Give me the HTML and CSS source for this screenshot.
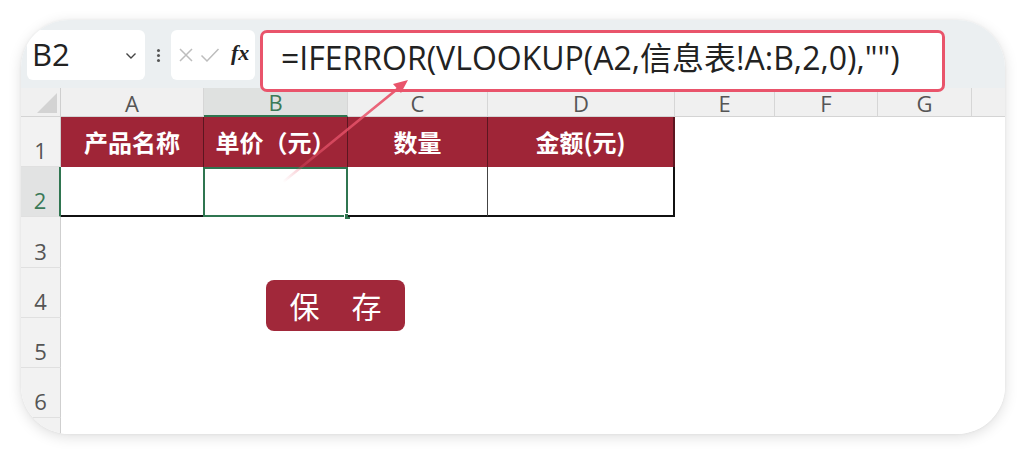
FILE: index.html
```html
<!DOCTYPE html>
<html lang="zh">
<head>
<meta charset="utf-8">
<title>Sheet</title>
<link rel="stylesheet" href="styles.css">
</head>
<body>
<div class="card">
  <div class="fbar">
    <div class="namebox">
      <span class="ref">B2</span>
      <svg class="chev" width="12" height="8" viewBox="0 0 12 8"><path d="M1.5 1.5 L6 6 L10.5 1.5" fill="none" stroke="#444" stroke-width="1.4"/></svg>
    </div>
    <div class="dots"><i></i><i></i><i></i></div>
    <div class="fxbox">
      <svg width="16" height="16" viewBox="0 0 16 16"><path d="M2 2 L14 14 M14 2 L2 14" stroke="#bdbdbd" stroke-width="1.5" fill="none"/></svg>
      <svg width="20" height="16" viewBox="0 0 20 16"><path d="M1.5 8.5 L7 14 L18.5 2" stroke="#bdbdbd" stroke-width="1.5" fill="none"/></svg>
      <span class="fx">fx</span>
    </div>
    <div class="formula">=IFERROR(VLOOKUP(A2,信息表!A:B,2,0),"")</div>
  </div>
  <div class="sheet">
    <div class="corner"><span class="tri"></span></div>
    <div class="ch">A</div>
    <div class="ch sel">B</div>
    <div class="ch">C</div>
    <div class="ch">D</div>
    <div class="ch">E</div>
    <div class="ch">F</div>
    <div class="ch">G</div>
    <div class="ch last"></div>

    <div class="rh">1</div>
    <div class="th">产品名称</div>
    <div class="th">单价（元）</div>
    <div class="th">数量</div>
    <div class="th end">金额(元)</div>
    <div class="blank"></div><div class="blank"></div><div class="blank"></div><div class="blank"></div>

    <div class="rh sel">2</div>
    <div class="td"></div>
    <div class="td sel"><span class="handle"></span></div>
    <div class="td"></div>
    <div class="td end"></div>
    <div class="blank"></div><div class="blank"></div><div class="blank"></div><div class="blank"></div>

    <div class="rh">3</div>
    <div class="blank"></div><div class="blank"></div><div class="blank"></div><div class="blank"></div><div class="blank"></div><div class="blank"></div><div class="blank"></div><div class="blank"></div>
    <div class="rh">4</div>
    <div class="blank"></div><div class="blank"></div><div class="blank"></div><div class="blank"></div><div class="blank"></div><div class="blank"></div><div class="blank"></div><div class="blank"></div>
    <div class="rh">5</div>
    <div class="blank"></div><div class="blank"></div><div class="blank"></div><div class="blank"></div><div class="blank"></div><div class="blank"></div><div class="blank"></div><div class="blank"></div>
    <div class="rh">6</div>
    <div class="blank"></div><div class="blank"></div><div class="blank"></div><div class="blank"></div><div class="blank"></div><div class="blank"></div><div class="blank"></div><div class="blank"></div>
    <div class="rh last"></div>
    <div class="blank"></div><div class="blank"></div><div class="blank"></div><div class="blank"></div><div class="blank"></div><div class="blank"></div><div class="blank"></div><div class="blank"></div>
  </div>
  <div class="save"><span>保</span><span>存</span></div>
  <svg class="arrow" width="984" height="414" viewBox="0 0 984 414">
    <defs>
      <linearGradient id="fade" x1="262" y1="162" x2="384" y2="63" gradientUnits="userSpaceOnUse">
        <stop offset="0" stop-color="#e9546b" stop-opacity="0"/>
        <stop offset="0.35" stop-color="#e9546b" stop-opacity="0.7"/>
        <stop offset="1" stop-color="#e9546b" stop-opacity="1"/>
      </linearGradient>
    </defs>
    <path d="M262 162 L380 66" stroke="url(#fade)" stroke-width="2.6" fill="none" stroke-linecap="round"/>
    <path d="M387 60 L372 64 L380 73 Z" fill="#e9546b"/>
  </svg>
</div>
</body>
</html>
```
FILE: styles.css
```css
* { box-sizing: border-box; }
html, body { margin: 0; padding: 0; background: #ffffff; }
body { width: 1024px; height: 454px; overflow: hidden; font-family: "Open Sans", "Noto Sans", "Noto Sans CJK SC", sans-serif; }

.card {
  position: relative;
  margin: 20px 0 0 21px;
  width: 984px;
  height: 414px;
  border-radius: 48px;
  overflow: hidden;
  background: #ffffff;
  box-shadow: 0 3px 14px rgba(0, 0, 0, 0.13), 0 0 3px rgba(0, 0, 0, 0.06);
}

.fbar {
  height: 68px;
  background: #ebeff1;
  display: flex;
  align-items: flex-start;
  padding: 10px 0 0 6px;
  position: relative;
  z-index: 2;
}
.namebox {
  width: 118px;
  height: 50px;
  background: #fff;
  border-radius: 6px;
  display: flex;
  align-items: center;
  justify-content: space-between;
  padding: 0 8px 0 5px;
}
.ref { font-size: 31px; color: #222; line-height: 1; margin-top: -2px; }
.chev { margin-top: 2px; }
.dots {
  width: 26px;
  height: 50px;
  display: flex;
  flex-direction: column;
  align-items: center;
  justify-content: center;
  gap: 2px;
}
.dots i { display: block; width: 3px; height: 3px; border-radius: 50%; background: #555; }
.fxbox {
  width: 84px;
  height: 50px;
  background: #fff;
  border-radius: 6px;
  display: flex;
  align-items: center;
  padding-left: 7px;
  gap: 6px;
}
.fx {
  font-family: "Liberation Serif", "DejaVu Serif", serif;
  font-style: italic;
  font-weight: 700;
  font-size: 22px;
  color: #222;
  margin-left: 5px;
  margin-top: -4px;
}
.formula {
  margin-left: 5px;
  width: 685px;
  height: 62px;
  background: #fff;
  border: 3px solid #e9546b;
  border-radius: 7px;
  padding: 0 0 6px 18px;
  display: flex;
  align-items: center;
  font-size: 32px;
  color: #222;
  white-space: nowrap;
  line-height: 1;
}

.sheet {
  display: grid;
  grid-template-columns: 40px 143px 144px 140px 187px 100px 103px 94px 1fr;
  grid-template-rows: 29px 50px 50px 51px 50px 50px 50px 1fr;
  height: 346px;
  font-family: "Open Sans", "Noto Sans", sans-serif;
}
.corner {
  background: #f0f0f0;
  border-bottom: 1px solid #d4d4d4;
  border-right: 1px solid #cfcfcf;
  position: relative;
}
.tri {
  position: absolute;
  right: 3px;
  bottom: 3px;
  width: 0;
  height: 0;
  border-left: 20px solid transparent;
  border-bottom: 20px solid #d3d3d3;
}
.ch {
  background: #f0f0f0;
  border-right: 1px solid #d6d6d6;
  border-bottom: 1px solid #d4d4d4;
  display: flex;
  align-items: center;
  justify-content: center;
  font-size: 22px;
  color: #555;
  padding-top: 1px;
}
.ch.sel {
  background: #dfe1e0;
  color: #3b7a58;
  border-bottom: 2px solid #2f7550;
}
.ch.last { border-right: none; }
.rh {
  background: #f2f2f2;
  border-right: 1px solid #cfcfcf;
  border-bottom: 1px solid #e0e0e0;
  display: flex;
  align-items: flex-end;
  justify-content: center;
  font-size: 22px;
  color: #555;
  padding-bottom: 1px;
}
.rh.sel {
  background: #e2e3e3;
  color: #3b7a58;
  border-right: 2px solid #2f7550;
}
.rh.last { border-bottom: none; }
.th {
  background: #9f2537;
  color: #fff;
  font-family: "Noto Sans CJK SC", "Noto Sans", sans-serif;
  font-weight: 700;
  font-size: 24px;
  display: flex;
  align-items: center;
  justify-content: center;
  border-right: 1px solid #5c1620;
  padding-bottom: 2px;
}
.th.end { border-right: 2px solid #5c1620; }
.td {
  background: #fff;
  border-right: 1px solid #444;
  border-bottom: 2px solid #111;
  position: relative;
}
.td.end { border-right: 2px solid #111; }
.td.sel {
  border: 2px solid #2f7550;
  margin-left: -1px;
}
.handle {
  position: absolute;
  right: -5px;
  bottom: -5px;
  width: 7px;
  height: 7px;
  background: #2f7550;
  border: 1px solid #fff;
}
.blank { background: #fff; }

.save {
  position: absolute;
  left: 245px;
  top: 260px;
  width: 139px;
  height: 51px;
  background: #a1283a;
  border-radius: 8px;
  display: flex;
  align-items: center;
  justify-content: center;
  gap: 32px;
  color: #fff;
  font-family: "Noto Sans CJK SC", sans-serif;
  font-size: 30px;
  padding-bottom: 2px;
}
.arrow {
  position: absolute;
  left: 0;
  top: 0;
  z-index: 3;
  pointer-events: none;
}
```
